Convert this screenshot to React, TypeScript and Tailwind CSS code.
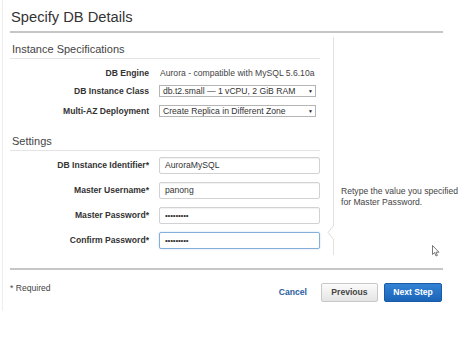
import React from 'react';

const Label: React.FC<{ text: string }> = ({ text }) => (
  <div className="w-[140px] shrink-0 pr-[1px] text-right text-[8.6px] font-bold text-[#333]">{text}</div>
);

const Select: React.FC<{ value: string }> = ({ value }) => (
  <div className="ml-[9px] flex h-full w-[157px] items-center justify-between border border-[#b5b5b5] bg-white pl-[3px] pr-[2px] text-[8.6px] text-[#333]">
    <span>{value}</span>
    <span className="text-[5px] leading-none text-[#222]">▼</span>
  </div>
);

const Input: React.FC<{ value: string; password?: boolean; focused?: boolean }> = ({ value, password, focused }) => (
  <div
    className={`ml-[9px] flex h-full w-[161px] items-center rounded-[2px] border bg-white pl-[5px] text-[#333] ${
      focused ? 'border-[#86aedb] shadow-[0_0_2px_rgba(80,140,210,0.35)]' : 'border-[#d2d2d2] shadow-[inset_0_1px_1px_rgba(0,0,0,0.06)]'
    }`}
  >
    {password ? (
      <span className="text-[8px] leading-none tracking-[-0.2px]">•••••••••</span>
    ) : (
      <span className="text-[8.6px]">{value}</span>
    )}
  </div>
);

const SectionTitle: React.FC<{ text: string; className: string }> = ({ text, className }) => (
  <div className={`border-b border-[#e4e4e4] pb-[2px] pl-[2px] text-[11px] leading-[13px] text-[#444] ${className}`}>{text}</div>
);

export default function App() {
  return (
    <div className="relative h-[348px] w-[474px] overflow-hidden bg-white font-['Liberation_Sans',Arial,sans-serif]">
      <div className="ml-[2px] h-[311px] w-[441px] border-l border-[#ededed] pl-[7px]">
        {/* Title */}
        <div className="h-[33px] border-b-2 border-[#c6c6c6] pl-[1px] pt-[9px] text-[14.7px] leading-[17px] text-[#333]">
          Specify DB Details
        </div>

        {/* Body */}
        <div className="flex h-[235px]">
          <div className="w-[310px] shrink-0">
            <SectionTitle text="Instance Specifications" className="pt-[10px]" />

            <div className="mt-[8px] flex h-[13px] items-center">
              <Label text="DB Engine" />
              <span className="ml-[10px] text-[8.6px] text-[#444]">Aurora - compatible with MySQL 5.6.10a</span>
            </div>
            <div className="mt-[5px] flex h-[12px] items-center">
              <Label text="DB Instance Class" />
              <Select value="db.t2.small — 1 vCPU, 2 GiB RAM" />
            </div>
            <div className="mt-[8px] flex h-[12px] items-center">
              <Label text="Multi-AZ Deployment" />
              <Select value="Create Replica in Different Zone" />
            </div>

            <SectionTitle text="Settings" className="mt-[18px]" />

            <div className="mt-[6px] flex h-[17px] items-center">
              <Label text="DB Instance Identifier*" />
              <Input value="AuroraMySQL" />
            </div>
            <div className="mt-[8px] flex h-[17px] items-center">
              <Label text="Master Username*" />
              <Input value="panong" />
            </div>
            <div className="mt-[8px] flex h-[17px] items-center">
              <Label text="Master Password*" />
              <Input value="" password />
            </div>
            <div className="mt-[8px] flex h-[17px] items-center">
              <Label text="Confirm Password*" />
              <Input value="" password focused />
            </div>
          </div>

          {/* Help column */}
          <div className="relative ml-[13px] mt-[4px] h-[218px] flex-1 border-l border-[#e2e2e2] pl-[7px]">
            <svg className="absolute left-[-7px] top-[188px]" width="8" height="16" viewBox="0 0 8 16">
              <polygon points="7,0 1,7.5 7,15 8,15 8,0" fill="#fff" />
              <polyline points="7,0 1,7.5 7,15" fill="none" stroke="#dcdcdc" strokeWidth="1" />
            </svg>
            <p className="mt-[149px] whitespace-nowrap text-[8.6px] leading-[11px] text-[#444]">
              Retype the value you specified
              <br />
              for Master Password.
            </p>
          </div>
        </div>

        {/* Footer */}
        <div className="flex items-start justify-between border-t-2 border-[#c6c6c6] pr-[1px]">
          <div className="mt-[13px] text-[8.6px] leading-[11px] text-[#444]">* Required</div>
          <div className="mt-[13px] flex h-[19px] items-center">
            <button className="text-[8.6px] font-bold text-[#2b5e9e]">Cancel</button>
            <button className="ml-[14px] h-[19px] w-[57px] rounded-[2px] border border-[#c8c8c8] bg-gradient-to-b from-[#fbfbfb] to-[#e4e4e4] text-[8.6px] font-bold text-[#444]">
              Previous
            </button>
            <button className="ml-[6px] h-[19px] w-[58px] rounded-[2px] border border-[#1a5ba6] bg-gradient-to-b from-[#3282d4] to-[#1b64b9] text-[8.6px] font-bold text-white">
              Next Step
            </button>
          </div>
        </div>
      </div>

      {/* mouse pointer */}
      <svg className="absolute left-[432px] top-[245px]" width="8" height="12" viewBox="0 0 8 12">
        <path d="M0.5 0.5 L0.5 9.5 L2.6 7.6 L4 11 L5.4 10.4 L4 7.2 L7 7.2 Z" fill="#fff" stroke="#555" strokeWidth="0.8" strokeLinejoin="round" />
      </svg>
    </div>
  );
}
